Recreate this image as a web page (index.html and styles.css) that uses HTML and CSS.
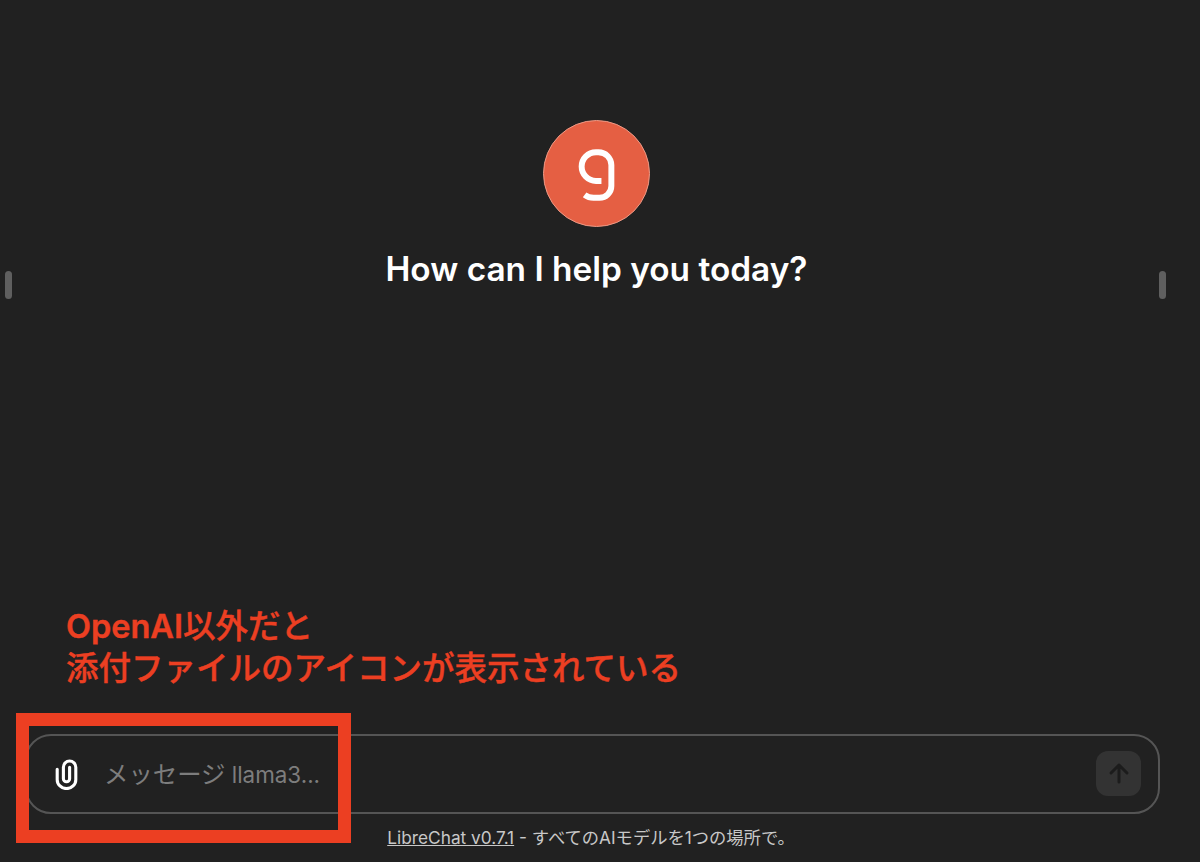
FILE: index.html
```html
<!DOCTYPE html>
<html lang="ja">
<head>
  <meta charset="UTF-8">
  <meta name="viewport" content="width=device-width, initial-scale=1.0">
  <title>LibreChat</title>
  <link rel="stylesheet" href="styles.css">
</head>
<body>
  <div class="page">
    <!-- Side panel handles -->
    <div class="handle handle-left"></div>
    <div class="handle handle-right"></div>

    <main class="chat">
      <div class="logo">
        <svg width="106" height="106" viewBox="0 0 106 106" fill="none">
          <path d="M58 60H52.5A14.5 14.5 0 0 1 52.5 31H55A13 13 0 0 1 68 44V65A12 12 0 0 1 56 77H50Q45 77 41 74" stroke="#fff" stroke-width="6" stroke-linecap="butt" stroke-linejoin="round"/>
        </svg>
      </div>
      <h1 class="greeting">How can I help you today?</h1>
    </main>

    <!-- Message box -->
    <form class="composer">
      <svg class="clip" width="23" height="31" viewBox="0 0 22 30" fill="none">
        <path d="M2 10V20A9 8.6 0 0 0 20 20V8A6 6 0 0 0 8 8V19A3 3 0 0 0 14 19V8" stroke="#fff" stroke-width="3" stroke-linecap="round"/>
      </svg>
      <div class="placeholder"><span class="placeholder-ja">メッセージ</span> llama3...</div>
      <button type="button" class="send">
        <svg width="24" height="24" viewBox="0 0 24 24" fill="none">
          <path d="M12 21V4M4 12L12 4L20 12" stroke="#1c1c1c" stroke-width="3" stroke-linecap="round" stroke-linejoin="round"/>
        </svg>
      </button>
    </form>

    <footer class="footer"><a href="#">LibreChat v0.7.1</a> - すべてのAIモデルを1つの場所で。</footer>

    <!-- Annotation drawn over the screenshot -->
    <p class="note"><span class="note-latin">OpenAI</span>以外だと<br>添付ファイルのアイコンが表示されている</p>
    <div class="note-box"></div>
  </div>
</body>
</html>
```

FILE: styles.css
```css
* {
  box-sizing: border-box;
}

body {
  margin: 0;
  background-color: #212121;
  font-family: Inter, "Noto Sans CJK JP", sans-serif;
}

.page {
  position: relative;
  display: flex;
  flex-direction: column;
  height: 862px;
  overflow: hidden;
}

.chat {
  flex: 1;
  display: flex;
  flex-direction: column;
  align-items: center;
  padding: 120px 7px 0 0;
}

.logo {
  width: 107px;
  height: 107px;
  border-radius: 50%;
  background-color: #e55f43;
  border: 1px solid #ee9a86;
  display: flex;
  align-items: center;
  justify-content: center;
}

.greeting {
  margin: 20px 0 0;
  color: #fff;
  font-size: 33.4px;
  font-weight: 600;
  line-height: 44px;
}

.composer {
  display: flex;
  align-items: center;
  height: 80px;
  margin: 0 40px 0 25px;
  padding: 0 17px 0 28px;
  border: 2px solid #555;
  border-radius: 26px;
}

.clip {
  flex-shrink: 0;
}

.placeholder {
  flex: 1;
  margin-left: 26px;
  margin-bottom: 3px;
  color: #7d7d7d;
  font-size: 22.4px;
}

.placeholder-ja {
  font-size: 24.4px;
}

.send {
  width: 45px;
  height: 45px;
  margin-bottom: 2px;
  padding: 0;
  border: none;
  border-radius: 12px;
  background-color: #333;
  display: flex;
  align-items: center;
  justify-content: center;
}

.footer {
  height: 48px;
  padding-top: 13px;
  padding-right: 18px;
  text-align: center;
  color: #c8c8c8;
  font-size: 17.3px;
  line-height: 22px;
}

.footer a {
  color: #c8c8c8;
}

.handle {
  position: absolute;
  top: 271px;
  width: 7px;
  height: 28px;
  border-radius: 4px;
  background-color: #5f5f5f;
}

.handle-left {
  left: 5px;
}

.handle-right {
  left: 1159px;
}

.note {
  position: absolute;
  top: 606px;
  left: 66px;
  margin: 0;
  color: #ec3f22;
  font-size: 32.5px;
  font-weight: 500;
  line-height: 42px;
  -webkit-text-stroke: 0.4px #ec3f22;
}

.note-latin {
  font-weight: 600;
}

.note-box {
  position: absolute;
  top: 713px;
  left: 16px;
  width: 335px;
  height: 130px;
  border: 13px solid #ec3f22;
}
```
